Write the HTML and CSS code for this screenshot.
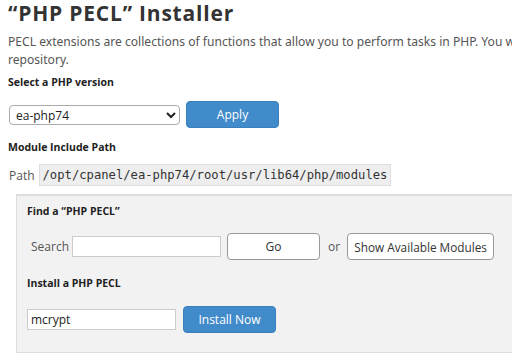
FILE: index.html
```html
<!DOCTYPE html>
<html lang="en">
<head>
  <meta charset="UTF-8">
  <title>PHP PECL Installer</title>
  <meta name="viewport" content="width=device-width, initial-scale=1">
  <link rel="stylesheet" href="styles.css">
</head>
<body>

<div class="page">
  <h1>“PHP PECL” Installer</h1>
  <p class="intro">PECL extensions are collections of functions that allow you to perform tasks in PHP. You will find these extensions in the PECL<br>repository.</p>

  <h4>Select a PHP version</h4>
  <div class="row version-row">
    <select class="version">
      <option>ea-php74</option>
    </select>
    <button type="button" class="btn btn-primary">Apply</button>
  </div>

  <h4>Module Include Path</h4>
  <div class="row path-row">
    <span class="muted">Path</span>
    <code class="path">/opt/cpanel/ea-php74/root/usr/lib64/php/modules</code>
  </div>

  <div class="panel">
    <h4>Find a “PHP PECL”</h4>
    <div class="row search-row">
      <label class="muted" for="search">Search</label>
      <input type="text" id="search" class="field">
      <button type="button" class="btn">Go</button>
      <span class="muted or">or</span>
      <button type="button" class="btn btn-wide">Show Available Modules</button>
    </div>

    <h4>Install a PHP PECL</h4>
    <div class="row install-row">
      <input type="text" class="field" value="mcrypt">
      <button type="button" class="btn btn-primary">Install Now</button>
    </div>
  </div>
</div>

</body>
</html>
```

FILE: styles.css
```css
html {
  overflow: hidden;
}

body {
  font-family: 'Open Sans', sans-serif;
  margin: 0;
  background: white;
  color: #333;
}

.page {
  width: 760px;
  padding: 0 8px;
}

h1 {
  font-size: 21px;
  font-weight: 700;
  letter-spacing: 0.8px;
  margin: 0;
  line-height: 27px;
  color: #333;
}

.intro {
  font-family: 'Noto Sans', sans-serif;
  font-size: 12.1px;
  line-height: 18px;
  margin: 6px 0 5px;
  color: #555;
  white-space: nowrap;
}

h4 {
  font-size: 10.5px;
  font-weight: 700;
  margin: 0;
  line-height: 16px;
  color: #222;
}

.row {
  display: flex;
  align-items: center;
}

.muted {
  font-size: 12px;
  color: #555;
}

.version-row {
  margin: 11px 0 11px 1px;
  gap: 6px;
}

select.version {
  width: 171px;
  height: 20px;
  font-family: 'Open Sans', sans-serif;
  font-size: 12px;
  border: 1px solid #aaa;
  border-radius: 4px;
  background: #fff;
  color: #222;
  padding: 0 2px;
}

.btn {
  height: 27px;
  width: 93px;
  font-family: 'Open Sans', sans-serif;
  font-size: 12px;
  border: 1px solid #999;
  border-radius: 4px;
  background: white;
  color: #333;
  cursor: pointer;
}

.btn-primary {
  background: #428bca;
  border-color: #3b80bd;
  color: white;
}

.btn-wide {
  width: 147px;
  padding: 0;
  font-size: 11.8px;
}

.path-row {
  margin: 9px 0 0 1px;
  gap: 4px;
}

.path {
  font-family: 'DejaVu Sans Mono', monospace;
  font-size: 12.2px;
  background: #eee;
  border: 1px solid #ddd;
  padding: 0 3px;
  line-height: 20px;
  color: #333;
}

.panel {
  margin: 8px 0 0 8px;
  background: #f2f2f2;
  border: 1px solid #ddd;
  border-top: 2px solid #ddd;
  padding: 7px 10px 19px;
}

.search-row {
  margin: 14px 0 15px 4px;
}

.search-row label {
  margin-right: 3px;
}

.field {
  width: 149px;
  height: 21px;
  box-sizing: border-box;
  border: 1px solid #ccc;
  background: white;
  font-family: 'Open Sans', sans-serif;
  font-size: 12px;
  padding: 0 3px;
  color: #222;
}

.search-row .btn {
  margin-left: 6px;
}

.or {
  margin-left: 8px;
  margin-right: 1px;
}

.install-row {
  margin-top: 15px;
  gap: 7px;
}
```
